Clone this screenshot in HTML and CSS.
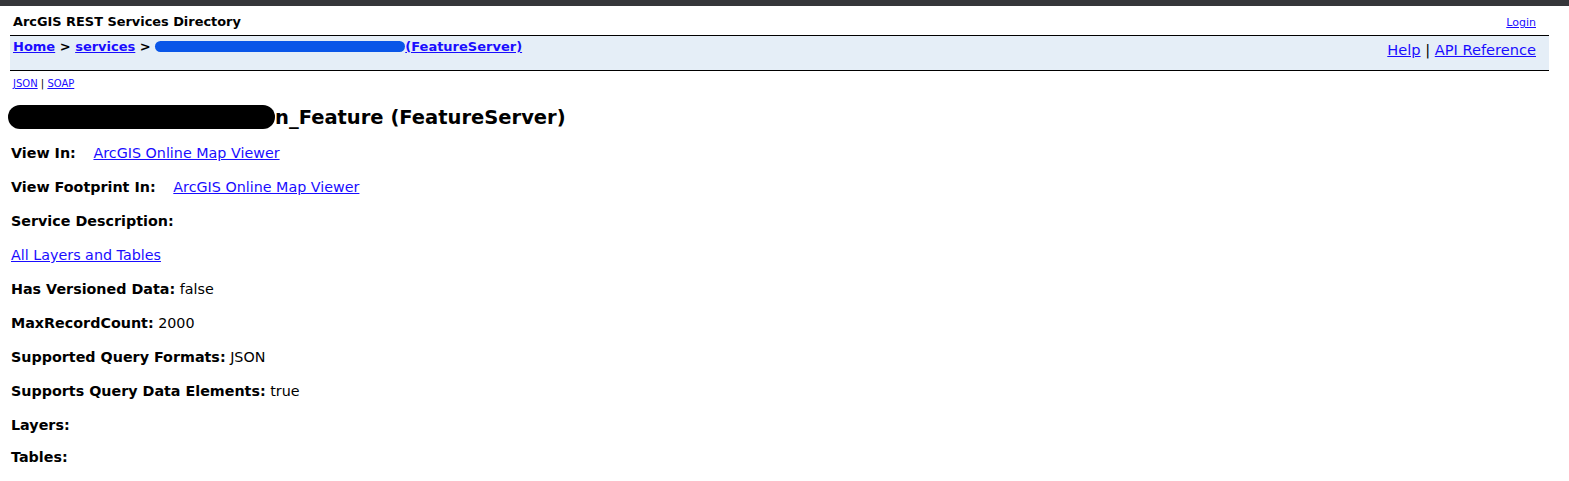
FILE: index.html
```html
<!DOCTYPE html>
<html>
<head>
<meta charset="utf-8">
<title>ArcGIS REST Services Directory</title>
<link rel="stylesheet" href="styles.css">
</head>
<body>
<div class="topbar"></div>
<div class="page">
  <div class="userbar">
    <span class="apptitle">ArcGIS REST Services Directory</span>
    <a href="#" class="login">Login</a>
  </div>
  <div class="navbar">
    <div class="crumbs">
      <a href="#">Home</a> &gt; <a href="#">services</a> &gt; <a href="#" class="hiddenlink"><span class="redact-blue"></span>(FeatureServer)</a>
    </div>
    <div class="helplinks"><a href="#">Help</a> | <a href="#">API Reference</a></div>
  </div>
  <div class="formats"><a href="#">JSON</a> | <a href="#">SOAP</a></div>
  <h2 class="svctitle"><span class="redact-black"></span>n_Feature (FeatureServer)</h2>
  <div class="content">
    <p class="row"><b>View In:</b> &nbsp; <a href="#" class="viewer">ArcGIS Online Map Viewer</a></p>
    <p class="row"><b>View Footprint In:</b> &nbsp; <a href="#" class="viewer">ArcGIS Online Map Viewer</a></p>
    <p class="row"><b>Service Description:</b></p>
    <p class="row"><a href="#">All Layers and Tables</a></p>
    <p class="row"><b>Has Versioned Data:</b> false</p>
    <p class="row"><b>MaxRecordCount:</b> 2000</p>
    <p class="row"><b>Supported Query Formats:</b> JSON</p>
    <p class="row"><b>Supports Query Data Elements:</b> true</p>
    <p class="row"><b>Layers:</b></p>
    <p class="row tight"><b>Tables:</b></p>
  </div>
</div>
</body>
</html>
```
FILE: styles.css
```css
html, body {
  margin: 0;
  padding: 0;
  background: #fff;
  color: #000;
  font-family: Verdana, "DejaVu Sans", sans-serif;
  font-size: 13px;
}
a { color: #1a0dff; }
.topbar {
  height: 6px;
  background: #35363a;
}
.page {
  padding: 0 20px 0 10px;
}
.userbar {
  display: flex;
  justify-content: space-between;
  align-items: flex-end;
  height: 30px;
  padding: 0 13px 0 3px;
  border-bottom: 1px solid #000;
  box-sizing: border-box;
}
.apptitle {
  font-weight: bold;
  font-size: 12.9px;
  padding-bottom: 6px;
}
.login {
  font-size: 11px;
  padding-bottom: 6px;
}
.navbar {
  display: flex;
  justify-content: space-between;
  background: #e5eef7;
  border-bottom: 1px solid #000;
  height: 35px;
  box-sizing: border-box;
  padding: 3px 13px 0 3px;
}
.crumbs {
  font-weight: bold;
  font-size: 13px;
}
.redact-blue {
  display: inline-block;
  width: 250px;
  height: 11px;
  background: #0a56e8;
  border-radius: 6px;
  vertical-align: -1px;
}
.helplinks {
  font-size: 14.6px;
  padding-top: 2px;
}
.formats {
  font-size: 10px;
  padding: 7px 0 0 3px;
}
.svctitle {
  margin: 16px 0 0 0;
  font-size: 19.5px;
  font-weight: bold;
  display: flex;
  align-items: center;
}
.redact-black {
  display: inline-block;
  width: 267px;
  height: 24px;
  background: #000;
  border-radius: 12px;
  margin-left: -2px;
}
.content {
  padding-left: 1px;
  margin-top: -1px;
}
.row {
  margin: 17px 0 0 0;
  font-size: 14.3px;
  line-height: 17px;
}
.row .viewer { margin-left: 4px; }
.row.tight { margin-top: 15px; }
```
